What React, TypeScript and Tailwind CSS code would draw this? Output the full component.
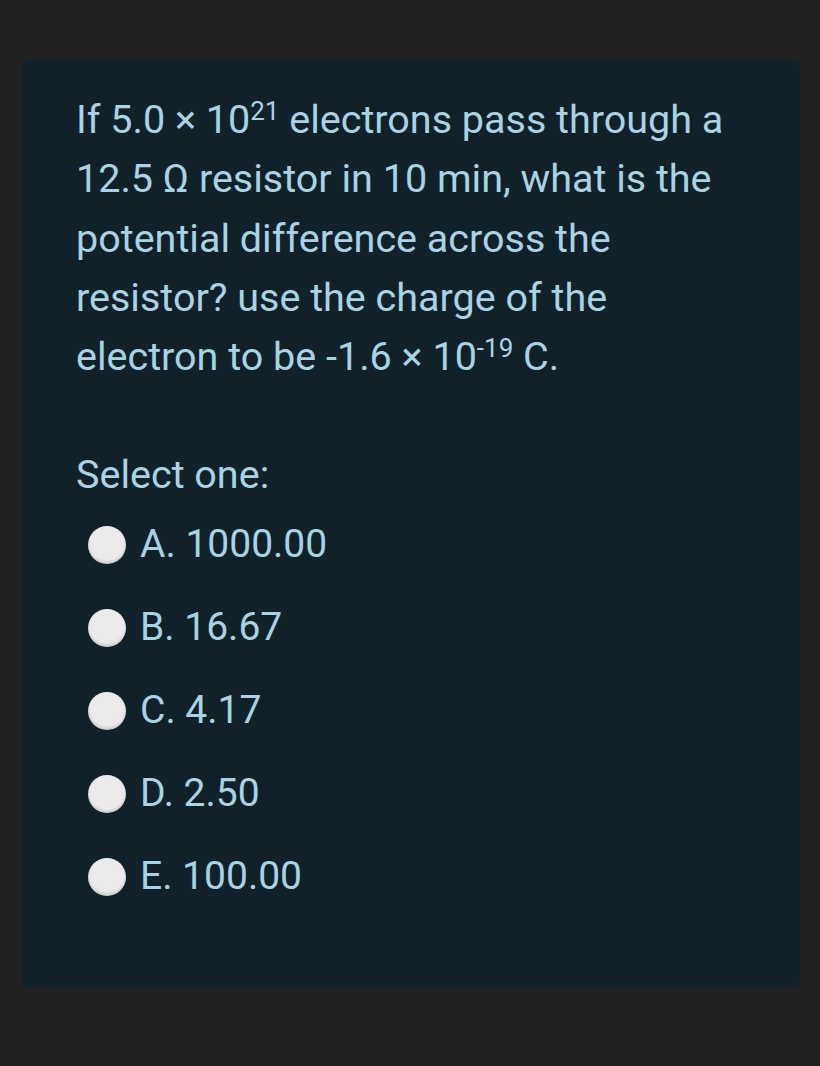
export default function App() {
  const options = ["A. 1000.00", "B. 16.67", "C. 4.17", "D. 2.50", "E. 100.00"];
  return (
    <div className="min-h-[1066px] w-[820px] bg-[#212121] pt-[60px] pl-[22px] font-['Roboto',sans-serif]">
      <div className="w-[778px] h-[927px] rounded-md bg-[#11212a] pl-[54px] pr-[60px] pt-[30px] text-[#a9d3e3]">
        <p className="text-[39.5px] leading-[59.3px]">
          If 5.0 × 10<sup className="text-[26px]">21</sup> electrons pass through a 12.5 Ω resistor in 10 min, what is the
          potential difference across the resistor? use the charge of the electron to be -1.6 × 10<sup className="text-[26px]">-19</sup> C.
        </p>
        <div className="mt-[59px] text-[39.5px] leading-[59px]">Select one:</div>
        <div className="mt-[11px] flex flex-col gap-[24px] pl-[12px]">
          {options.map((o) => (
            <div key={o} className="flex items-center gap-[14px] h-[59px]">
              <span className="w-[38px] h-[38px] rounded-full bg-[#ebebeb] shadow-[inset_0_-2px_3px_rgba(0,0,0,0.15)]" />
              <span className="text-[39px] leading-[59px]">{o}</span>
            </div>
          ))}
        </div>
      </div>
    </div>
  );
}
